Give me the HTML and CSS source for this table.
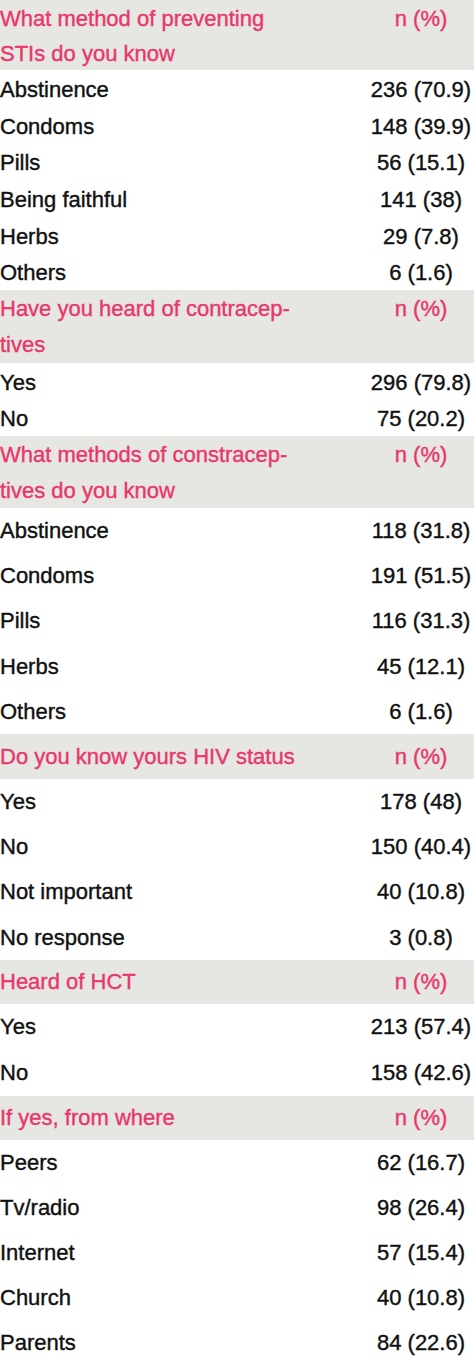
FILE: index.html
```html
<!DOCTYPE html>
<html lang="en">
<head>
<meta charset="utf-8">
<title>STI and contraceptive knowledge</title>
<link rel="stylesheet" href="styles.css">
</head>
<body>
<div class="table">
  <section class="sec s1">
    <div class="row head"><div class="lab">What method of preventing STIs do you know</div><div class="val">n (%)</div></div>
    <div class="row"><div class="lab">Abstinence</div><div class="val">236 (70.9)</div></div>
    <div class="row"><div class="lab">Condoms</div><div class="val">148 (39.9)</div></div>
    <div class="row"><div class="lab">Pills</div><div class="val">56 (15.1)</div></div>
    <div class="row"><div class="lab">Being faithful</div><div class="val">141 (38)</div></div>
    <div class="row"><div class="lab">Herbs</div><div class="val">29 (7.8)</div></div>
    <div class="row"><div class="lab">Others</div><div class="val">6 (1.6)</div></div>
  </section>
  <section class="sec s2">
    <div class="row head"><div class="lab">Have you heard of contracep-<br>tives</div><div class="val">n (%)</div></div>
    <div class="row"><div class="lab">Yes</div><div class="val">296 (79.8)</div></div>
    <div class="row"><div class="lab">No</div><div class="val">75 (20.2)</div></div>
  </section>
  <section class="sec s3">
    <div class="row head"><div class="lab">What methods of constracep-<br>tives do you know</div><div class="val">n (%)</div></div>
    <div class="row"><div class="lab">Abstinence</div><div class="val">118 (31.8)</div></div>
    <div class="row"><div class="lab">Condoms</div><div class="val">191 (51.5)</div></div>
    <div class="row"><div class="lab">Pills</div><div class="val">116 (31.3)</div></div>
    <div class="row"><div class="lab">Herbs</div><div class="val">45 (12.1)</div></div>
    <div class="row"><div class="lab">Others</div><div class="val">6 (1.6)</div></div>
  </section>
  <section class="sec s4">
    <div class="row head"><div class="lab">Do you know yours HIV status</div><div class="val">n (%)</div></div>
    <div class="row"><div class="lab">Yes</div><div class="val">178 (48)</div></div>
    <div class="row"><div class="lab">No</div><div class="val">150 (40.4)</div></div>
    <div class="row"><div class="lab">Not important</div><div class="val">40 (10.8)</div></div>
    <div class="row"><div class="lab">No response</div><div class="val">3 (0.8)</div></div>
  </section>
  <section class="sec s5">
    <div class="row head"><div class="lab">Heard of HCT</div><div class="val">n (%)</div></div>
    <div class="row"><div class="lab">Yes</div><div class="val">213 (57.4)</div></div>
    <div class="row"><div class="lab">No</div><div class="val">158 (42.6)</div></div>
  </section>
  <section class="sec s6">
    <div class="row head"><div class="lab">If yes, from where</div><div class="val">n (%)</div></div>
    <div class="row"><div class="lab">Peers</div><div class="val">62 (16.7)</div></div>
    <div class="row"><div class="lab">Tv/radio</div><div class="val">98 (26.4)</div></div>
    <div class="row"><div class="lab">Internet</div><div class="val">57 (15.4)</div></div>
    <div class="row"><div class="lab">Church</div><div class="val">40 (10.8)</div></div>
    <div class="row"><div class="lab">Parents</div><div class="val">84 (22.6)</div></div>
  </section>
</div>
</body>
</html>
```

FILE: styles.css
```css
html, body {
  margin: 0;
  padding: 0;
  background: #ffffff;
}
body {
  width: 474px;
  overflow: hidden;
  font-family: "Liberation Sans", Arial, sans-serif;
  font-size: 22px;
  color: #111111;
  -webkit-text-stroke: 0.4px currentColor;
}
.table {
  display: flex;
  flex-direction: column;
}
.sec {
  display: flex;
  flex-direction: column;
}
.row {
  display: grid;
  grid-template-columns: 1fr 106px;
  box-sizing: border-box;
  align-items: start;
}
.lab {
  padding-left: 0;
  white-space: nowrap;
}
.val {
  text-align: center;
  white-space: nowrap;
}
.head {
  background: #e6e6e3;
  color: #e8386b;
}

/* section 1 */
.s1 .head { height: 70px; line-height: 35px; padding-top: 1px; }
.s1 .head .lab { white-space: normal; width: 280px; }
.s1 .row:not(.head) { height: 36.67px; line-height: 36.67px; padding-top: 2px; }

/* section 2 */
.s2 .head { height: 73px; line-height: 36.5px; padding-top: 1px; }
.s2 .row:not(.head) { height: 36.5px; line-height: 36.5px; padding-top: 2px; }

/* section 3 */
.s3 .head { height: 72px; line-height: 36px; padding-top: 1px; }
.s3 .row:not(.head) { height: 45.2px; line-height: 45.2px; }

/* section 4 */
.s4 .head { height: 45px; line-height: 45px; }
.s4 .row:not(.head) { height: 45.25px; line-height: 45.25px; }

/* section 5 */
.s5 .head { height: 44px; line-height: 44px; }
.s5 .row:not(.head) { height: 46px; line-height: 46px; }

/* section 6 */
.s6 .head { height: 44px; line-height: 44px; }
.s6 .row:not(.head) { height: 45px; line-height: 45px; }
```
